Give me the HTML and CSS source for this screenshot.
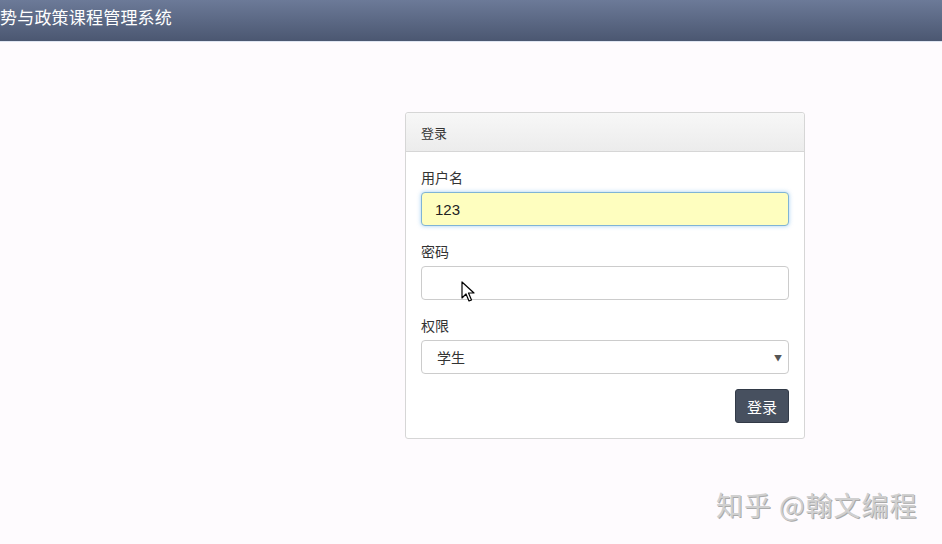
FILE: index.html
```html
<!DOCTYPE html>
<html lang="zh">
<head>
<meta charset="utf-8">
<title>形势与政策课程管理系统</title>
<link rel="stylesheet" href="styles.css">
</head>
<body>
<header class="topbar">
  <span class="brand">势与政策课程管理系统</span>
</header>
<main class="page">
  <section class="panel">
    <div class="panel-heading">登录</div>
    <form class="panel-body">
      <div class="form-group">
        <label class="label">用户名</label>
        <input class="control filled" type="text" value="123">
      </div>
      <div class="form-group">
        <label class="label">密码</label>
        <div class="cursor-wrap">
          <input class="control" type="password">
          <svg class="cursor" width="14" height="22" viewBox="0 0 14 22"><path d="M1 1 L1 17 L5 13 L8 20 L10.5 19 L7.5 12 L13 12 Z" fill="#fff" stroke="#000" stroke-width="1.2" stroke-linejoin="round"/></svg>
        </div>
      </div>
      <div class="form-group">
        <label class="label">权限</label>
        <div class="select">
          <span>学生</span>
          <span class="caret">▼</span>
        </div>
      </div>
      <div class="actions">
        <button type="button" class="btn">登录</button>
      </div>
    </form>
  </section>
  <div class="watermark">知乎 @翰文编程</div>
</main>
</body>
</html>
```

FILE: styles.css
```css
html, body {
  margin: 0;
  padding: 0;
}
body {
  width: 942px;
  height: 544px;
  overflow: hidden;
  background: #fefbfe;
  font-family: "Noto Sans CJK SC", "Noto Sans", sans-serif;
  color: #333;
}
.topbar {
  height: 42px;
  box-sizing: border-box;
  background: linear-gradient(#6c7a98, #4b5771);
  border-bottom: 1px solid #dfe5f2;
  display: flex;
  align-items: center;
}
.brand {
  color: #fff;
  font-size: 17px;
  margin-left: 0;
  letter-spacing: 0.2px;
  line-height: 1;
  padding-bottom: 8px;
}
.page {
  position: relative;
  height: 502px;
  padding-top: 70px;
  box-sizing: border-box;
}
.panel {
  margin-left: 405px;
  width: 400px;
  box-sizing: border-box;
  border: 1px solid #d6d6d6;
  border-radius: 3px;
  background: #fff;
}
.panel-heading {
  height: 39px;
  box-sizing: border-box;
  padding: 0 15px;
  display: flex;
  align-items: center;
  font-size: 13px;
  color: #333;
  background: linear-gradient(#f7f7f7, #ececec);
  border-bottom: 1px solid #d6d6d6;
  border-radius: 3px 3px 0 0;
}
.panel-body {
  margin: 0;
  padding: 15px;
}
.form-group {
  margin-bottom: 15px;
}
.label {
  display: block;
  height: 20px;
  line-height: 20px;
  font-size: 14px;
  margin-bottom: 5px;
  color: #333;
}
.control {
  display: block;
  width: 100%;
  height: 34px;
  box-sizing: border-box;
  border: 1px solid #ccc;
  border-radius: 4px;
  background: #fff;
  padding: 0 13px;
  font-family: "Liberation Sans", Arial, sans-serif;
  font-size: 15px;
  color: #222;
  outline: none;
}
.control.filled {
  background: #fefebf;
  border-color: #7fb4d6;
  box-shadow: 0 0 4px rgba(102, 175, 233, 0.6);
}
.cursor-wrap {
  position: relative;
}
.cursor {
  position: absolute;
  left: 40px;
  top: 15px;
}
.select {
  height: 34px;
  box-sizing: border-box;
  border: 1px solid #ccc;
  border-radius: 4px;
  background: #fff;
  display: flex;
  align-items: center;
  justify-content: space-between;
  padding: 0 6px 0 15px;
  font-size: 14px;
  color: #333;
}
.caret {
  font-size: 8px;
  color: #555;
}
.actions {
  display: flex;
  justify-content: flex-end;
}
.btn {
  width: 54px;
  height: 34px;
  border: 1px solid #323a47;
  border-radius: 3px;
  background: #47505f;
  color: #fff;
  font-family: "Noto Sans CJK SC", sans-serif;
  font-size: 15px;
  padding: 0;
}
.watermark {
  position: absolute;
  left: 716px;
  top: 443px;
  font-size: 27px;
  color: #d0d0d0;
  text-shadow: 1px 1px 0 #aaa;
  letter-spacing: 1px;
  white-space: nowrap;
}
```
